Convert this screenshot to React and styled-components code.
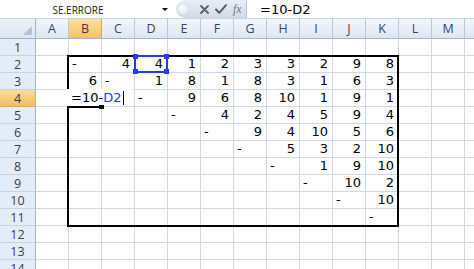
import React from "react";
import styled, { createGlobalStyle } from "styled-components";

const GlobalStyle = createGlobalStyle`
  html, body { margin: 0; padding: 0; background: #ffffff; overflow: hidden; }
  body { font-family: "DejaVu Sans", Verdana, sans-serif; }
`;

const COLS = ["A", "B", "C", "D", "E", "F", "G", "H", "I", "J", "K", "L", "M", "N"];
const ROWS = 14;
const ACTIVE_COL = "B";
const ACTIVE_ROW = 4;

// values for B..K, by row
const data = {
  2: ["-", "4", "4", "1", "2", "3", "3", "2", "9", "8"],
  3: ["6", "-", "1", "8", "1", "8", "3", "1", "6", "3"],
  4: ["", "", "-", "9", "6", "8", "10", "1", "9", "1"],
  5: ["", "", "", "-", "4", "2", "4", "5", "9", "4"],
  6: ["", "", "", "", "-", "9", "4", "10", "5", "6"],
  7: ["", "", "", "", "", "-", "5", "3", "2", "10"],
  8: ["", "", "", "", "", "", "-", "1", "9", "10"],
  9: ["", "", "", "", "", "", "", "-", "10", "2"],
  10: ["", "", "", "", "", "", "", "", "-", "10"],
  11: ["", "", "", "", "", "", "", "", "", "-"],
};

const Page = styled.div`
  width: 474px;
  height: 269px;
  overflow: hidden;
  background: #fff;
`;

const FormulaBar = styled.div`
  display: flex;
  height: 19px;
  border-bottom: 1px solid #c9d5e4;
  box-sizing: border-box;
  background: #fff;
`;

const NameBox = styled.div`
  width: 156px;
  display: flex;
  align-items: center;
  justify-content: center;
  font-family: "Open Sans", sans-serif;
  font-size: 10px;
  color: #1a1a1a;
  padding-top: 1px;
`;

const DropButton = styled.div`
  width: 18px;
  display: flex;
  align-items: center;
  justify-content: center;
  &::after {
    content: "";
    border-left: 3px solid transparent;
    border-right: 3px solid transparent;
    border-top: 3px solid #111;
  }
`;

const ButtonPill = styled.div`
  width: 70px;
  margin-left: 2px;
  display: flex;
  align-items: center;
  border-radius: 9px 0 0 9px;
  background: linear-gradient(#e8eef6, #cfdbe9);
  border-right: 1px solid #b7c6d8;
`;

const Knob = styled.div`
  width: 11px;
  height: 11px;
  margin-left: 2px;
  border-radius: 50%;
  background: radial-gradient(circle at 40% 35%, #ffffff, #dfe6ee 70%, #c3cfdc);
  box-shadow: 0 0 1px #9fb0c4;
`;

const BarIcon = styled.div`
  display: flex;
  align-items: center;
  margin-left: ${(p) => p.gap}px;
`;

const Fx = styled.span`
  margin-left: 6px;
  font-family: "Liberation Serif", serif;
  font-style: italic;
  font-size: 12px;
  color: #7a7a7a;
`;

const FormulaInput = styled.div`
  flex: 1;
  display: flex;
  align-items: center;
  padding-left: 13px;
  font-size: 13px;
  color: #000;
`;

const SheetWrap = styled.div`
  position: relative;
`;

const Grid = styled.div`
  display: grid;
  grid-template-columns: 36px repeat(14, 33px);
  grid-template-rows: 20px repeat(${ROWS}, 17px);
`;

const Corner = styled.div`
  position: relative;
  box-sizing: border-box;
  background: linear-gradient(#eef2f8, #dce5f1);
  border-right: 1px solid #9eb6ce;
  border-bottom: 1px solid #9eb6ce;
  &::after {
    content: "";
    position: absolute;
    right: 3px;
    bottom: 3px;
    border-left: 9px solid transparent;
    border-bottom: 9px solid #b6c2d0;
  }
`;

const ColHead = styled.div`
  box-sizing: border-box;
  display: flex;
  align-items: center;
  justify-content: center;
  font-family: "Open Sans", sans-serif;
  font-size: 12.5px;
  color: ${(p) => (p.active ? "#3b3b3b" : "#37465a")};
  background: ${(p) =>
    p.active ? "linear-gradient(#fbe0a6, #f4c064)" : "linear-gradient(#f3f6fb, #dde6f2)"};
  border-right: 1px solid ${(p) => (p.active ? "#e0a94f" : "#b8c9dc")};
  border-bottom: 1px solid #9eb6ce;
`;

const RowHead = styled.div`
  box-sizing: border-box;
  display: flex;
  align-items: center;
  justify-content: center;
  font-family: "Open Sans", sans-serif;
  font-size: 12.5px;
  color: #33404f;
  background: ${(p) => (p.active ? "linear-gradient(#fbdc9c, #f3bd5e)" : "#e4ecf7")};
  border-right: 1px solid #9eb6ce;
  border-bottom: 1px solid ${(p) => (p.active ? "#e0a94f" : "#c5d3e6")};
`;

const Cell = styled.div`
  box-sizing: border-box;
  border-right: 1px solid #d0d7e5;
  border-bottom: 1px solid #d0d7e5;
  font-size: 13px;
  line-height: 16px;
  color: #000;
  white-space: nowrap;
  overflow: hidden;
  text-align: ${(p) => p.align};
  padding: 0 ${(p) => (p.align === "right" ? 4 : 2)}px 0 ${(p) => (p.align === "right" ? 0 : 3)}px;
`;

const RangeOutline = styled.div`
  position: absolute;
  left: 67px;
  top: 36px;
  width: 332px;
  height: 172px;
  box-sizing: border-box;
  border: 2px solid #000;
  pointer-events: none;
`;

const RefBox = styled.div`
  position: absolute;
  left: 134px;
  top: 36px;
  width: 34px;
  height: 18px;
  box-sizing: border-box;
  border: 2px solid #1f3cff;
`;

const Handle = styled.span`
  position: absolute;
  width: 5px;
  height: 5px;
  background: #1f3cff;
  left: ${(p) => (p.right ? "auto" : "-3px")};
  right: ${(p) => (p.right ? "-3px" : "auto")};
  top: ${(p) => (p.bottom ? "auto" : "-3px")};
  bottom: ${(p) => (p.bottom ? "-3px" : "auto")};
`;

const ActiveEdge = styled.div`
  position: absolute;
  left: 67px;
  top: 87px;
  width: 33px;
  height: 2px;
  background: #000;
  &::after {
    content: "";
    position: absolute;
    right: -4px;
    top: -1px;
    width: 5px;
    height: 4px;
    background: #000;
  }
`;

const Editor = styled.div`
  position: absolute;
  left: 66px;
  top: 70px;
  width: 67px;
  height: 17px;
  background: #fff;
  display: flex;
  align-items: center;
  padding-left: 5px;
  box-sizing: border-box;
  font-size: 13px;
  color: #000;
  white-space: nowrap;
`;

const RefText = styled.span`
  color: #1f3cff;
`;

const Caret = styled.span`
  display: inline-block;
  width: 1px;
  height: 14px;
  margin-left: 2px;
  background: #000;
`;

const CloseIcon = () => (
  <svg width="9" height="9" viewBox="0 0 9 9">
    <path d="M1 1 L8 8 M8 1 L1 8" stroke="#5f6165" strokeWidth="1.8" strokeLinecap="round" />
  </svg>
);

const CheckIcon = () => (
  <svg width="12" height="10" viewBox="0 0 12 10">
    <path d="M1 5.5 L4.3 8.8 L11 1.2" stroke="#55575b" strokeWidth="1.9" fill="none" strokeLinecap="round" strokeLinejoin="round" />
  </svg>
);

export default function App() {
  const cells = [];
  cells.push(<Corner key="corner" />);
  COLS.forEach((c) => cells.push(<ColHead key={"h" + c} active={c === ACTIVE_COL}>{c}</ColHead>));
  for (let r = 1; r <= ROWS; r++) {
    cells.push(<RowHead key={"r" + r} active={r === ACTIVE_ROW}>{r}</RowHead>);
    COLS.forEach((c, i) => {
      const vals = data[r];
      const v = vals && i >= 1 && i <= 10 ? vals[i - 1] : "";
      const align = v === "-" ? "left" : "right";
      cells.push(<Cell key={c + r} align={align}>{v}</Cell>);
    });
  }

  return (
    <Page>
      <GlobalStyle />
      <FormulaBar>
        <NameBox>SE.ERRORE</NameBox>
        <DropButton />
        <ButtonPill>
          <Knob />
          <BarIcon gap={11}><CloseIcon /></BarIcon>
          <BarIcon gap={6}><CheckIcon /></BarIcon>
          <Fx>fx</Fx>
        </ButtonPill>
        <FormulaInput>=10-D2</FormulaInput>
      </FormulaBar>
      <SheetWrap>
        <Grid>{cells}</Grid>
        <RangeOutline />
        <RefBox>
          <Handle />
          <Handle right />
          <Handle bottom />
          <Handle right bottom />
        </RefBox>
        <Editor>
          =10-<RefText>D2</RefText>
          <Caret />
        </Editor>
        <ActiveEdge />
      </SheetWrap>
    </Page>
  );
}
